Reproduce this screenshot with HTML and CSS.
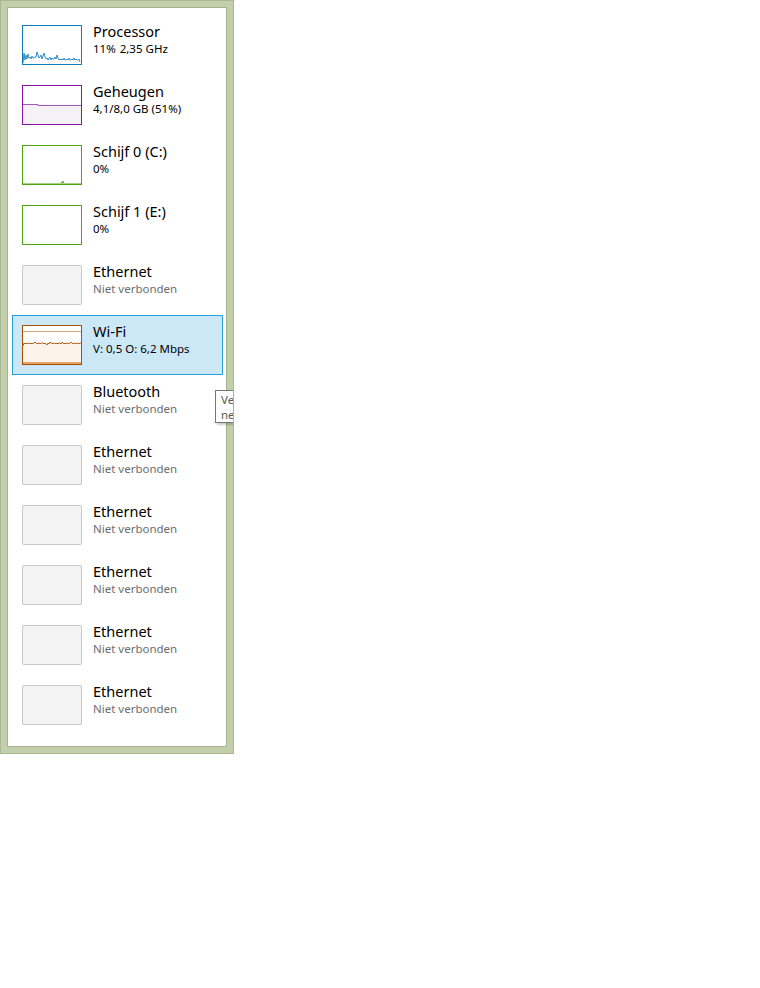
FILE: index.html
```html
<!DOCTYPE html>
<html lang="nl">
<head>
<meta charset="utf-8">
<title>Prestaties</title>
<link rel="stylesheet" href="styles.css">
</head>
<body>
<div class="window">
  <div class="panel">
    <ul class="devices">
      <li class="device">
        <div class="graph graph-cpu">
          <svg viewBox="0 0 58 38" width="58" height="38">
            <polyline class="line-cpu" points="0,37 1,27 2,34 3,29 4,33 5,28 6,32 7,31 8,33 9,30 10,32 11,32 12,31 13,31 14,26 15,29 16,32 17,31 18,29 19,33 20,30 21,27 22,31 23,33 24,32 25,34 26,32 27,31 28,34 29,32 30,33 31,33 32,31 33,33 34,29 35,32 36,34 37,33 38,34 39,33 40,34 41,32 42,34 43,34 44,33 45,34 46,32 47,34 48,34 49,33 50,34 51,32 52,34 53,33 54,34 55,34 56,33 57,36"/>
          </svg>
        </div>
        <div class="info">
          <div class="name">Processor</div>
          <div class="value">11% <span class="gap"></span>2,35 GHz</div>
        </div>
      </li>
      <li class="device">
        <div class="graph graph-mem">
          <svg viewBox="0 0 58 38" width="58" height="38">
            <polygon class="fill-mem" points="0,19 15,19 15,20 58,20 58,38 0,38"/>
            <polyline class="line-mem" points="0,18.5 15,18.5 15,19.5 58,19.5"/>
          </svg>
        </div>
        <div class="info">
          <div class="name">Geheugen</div>
          <div class="value">4,1/8,0 GB (51%)</div>
        </div>
      </li>
      <li class="device">
        <div class="graph graph-disk">
          <svg viewBox="0 0 58 38" width="58" height="38">
            <polygon class="fill-disk" points="38,38 38,35 39,36 40,35 41,35 41,38"/>
            <line class="line-disk" x1="0" y1="37.5" x2="58" y2="37.5"/>
          </svg>
        </div>
        <div class="info">
          <div class="name">Schijf 0 (C:)</div>
          <div class="value">0%</div>
        </div>
      </li>
      <li class="device">
        <div class="graph graph-disk"></div>
        <div class="info">
          <div class="name">Schijf 1 (E:)</div>
          <div class="value">0%</div>
        </div>
      </li>
      <li class="device">
        <div class="graph graph-off"></div>
        <div class="info">
          <div class="name">Ethernet</div>
          <div class="value muted">Niet verbonden</div>
        </div>
      </li>
      <li class="device selected">
        <div class="graph graph-wifi">
          <svg viewBox="0 0 58 38" width="58" height="38">
            <rect class="fill-wifi" x="0" y="17" width="58" height="21"/>
            <line class="line-scale" x1="0" y1="5.5" x2="58" y2="5.5"/>
            <polyline class="line-wifi" points="0,20 1,17 2,18 3,17 4,18 5,17 6,17 7,18 8,17 9,18 10,17 11,17 12,16 13,17 14,18 15,17 16,17 17,18 18,17 19,17 20,17 21,18 22,17 23,18 24,19 25,17 26,18 27,16 28,17 29,17 30,18 31,17 32,17 33,18 34,17 35,18 36,17 37,17 38,18 39,16 40,17 41,18 42,17 43,18 44,17 45,17 46,18 47,17 48,16 49,17 50,18 51,17 52,17 53,18 54,17 55,17 56,18 57,17 58,17"/>
            <line class="line-send" x1="0" y1="37" x2="58" y2="37"/>
          </svg>
        </div>
        <div class="info">
          <div class="name">Wi-Fi</div>
          <div class="value">V: 0,5 O: 6,2 Mbps</div>
        </div>
      </li>
      <li class="device">
        <div class="graph graph-off"></div>
        <div class="info">
          <div class="name">Bluetooth</div>
          <div class="value muted">Niet verbonden</div>
        </div>
      </li>
      <li class="device">
        <div class="graph graph-off"></div>
        <div class="info">
          <div class="name">Ethernet</div>
          <div class="value muted">Niet verbonden</div>
        </div>
      </li>
      <li class="device">
        <div class="graph graph-off"></div>
        <div class="info">
          <div class="name">Ethernet</div>
          <div class="value muted">Niet verbonden</div>
        </div>
      </li>
      <li class="device">
        <div class="graph graph-off"></div>
        <div class="info">
          <div class="name">Ethernet</div>
          <div class="value muted">Niet verbonden</div>
        </div>
      </li>
      <li class="device">
        <div class="graph graph-off"></div>
        <div class="info">
          <div class="name">Ethernet</div>
          <div class="value muted">Niet verbonden</div>
        </div>
      </li>
      <li class="device">
        <div class="graph graph-off"></div>
        <div class="info">
          <div class="name">Ethernet</div>
          <div class="value muted">Niet verbonden</div>
        </div>
      </li>
    </ul>
  </div>
  <div class="tooltip">Verbinding<br>netwerk</div>
</div>
</body>
</html>
```
FILE: styles.css
```css
* {
  box-sizing: border-box;
}

body {
  margin: 0;
  background: #ffffff;
  font-family: "Noto Sans", "Open Sans", sans-serif;
  color: #000000;
}

/* window frame with the light green border */
.window {
  position: relative;
  width: 234px;
  height: 754px;
  overflow: hidden;
  background: #c3cfab;
  border: 1px solid #aab794;
  padding: 6px;
}

.panel {
  height: 100%;
  background: #ffffff;
  border: 1px solid #a6b28f;
  padding: 7px 3px 0 4px;
}

.devices {
  list-style: none;
  margin: 0;
  padding: 0;
}

.device {
  display: flex;
  align-items: flex-start;
  height: 60px;
  padding: 9px 0 0 9px;
  border: 1px solid transparent;
  gap: 11px;
}

.device.selected {
  background: #cce8f6;
  border-color: #26a0da;
}

.graph {
  flex: none;
  width: 60px;
  height: 40px;
  border: 1px solid #c6c6c6;
  background: #ffffff;
}

.graph svg {
  display: block;
}

.graph-cpu {
  border-color: #117dbb;
}

.line-cpu {
  fill: none;
  stroke: #2f8dcc;
  stroke-width: 1;
}

.graph-mem {
  border-color: #8b12ae;
}

.fill-mem {
  fill: #f4f2f4;
}

.line-mem {
  fill: none;
  stroke: #a254ba;
  stroke-width: 1;
}

.graph-disk {
  border-color: #4da60c;
}

.fill-disk {
  fill: #6cb83a;
}

.line-disk {
  stroke: #a6d485;
  stroke-width: 1;
}

.graph-off {
  background: #f4f4f4;
  border-color: #c8c8c8;
  border-radius: 2px;
}

.graph-wifi {
  border-color: #a74f01;
}

.fill-wifi {
  fill: #fcf3eb;
}

.line-scale {
  stroke: #d6a77f;
  stroke-width: 1;
}

.line-wifi {
  fill: none;
  stroke: #b3631f;
  stroke-width: 1;
}

.line-send {
  stroke: #e8a36a;
  stroke-width: 2;
}

.info {
  display: flex;
  flex-direction: column;
  margin-top: -3px;
}

.name {
  font-size: 14.5px;
  line-height: 19px;
  color: #000000;
  white-space: nowrap;
}

.value {
  font-size: 11.5px;
  line-height: 15px;
  color: #000000;
  white-space: nowrap;
}

.value .gap {
  display: inline-block;
  width: 1px;
}

.value.muted {
  color: #6d6d6d;
}

/* hover tooltip shown next to the Bluetooth entry */
.tooltip {
  position: absolute;
  left: 214px;
  top: 389px;
  width: 90px;
  height: 33px;
  padding: 1px 0 0 5px;
  background: #ffffff;
  border: 1px solid #767676;
  box-shadow: 2px 2px 2px rgba(0, 0, 0, 0.2);
  font-size: 11.5px;
  line-height: 15px;
  color: #575757;
  white-space: nowrap;
}
```
